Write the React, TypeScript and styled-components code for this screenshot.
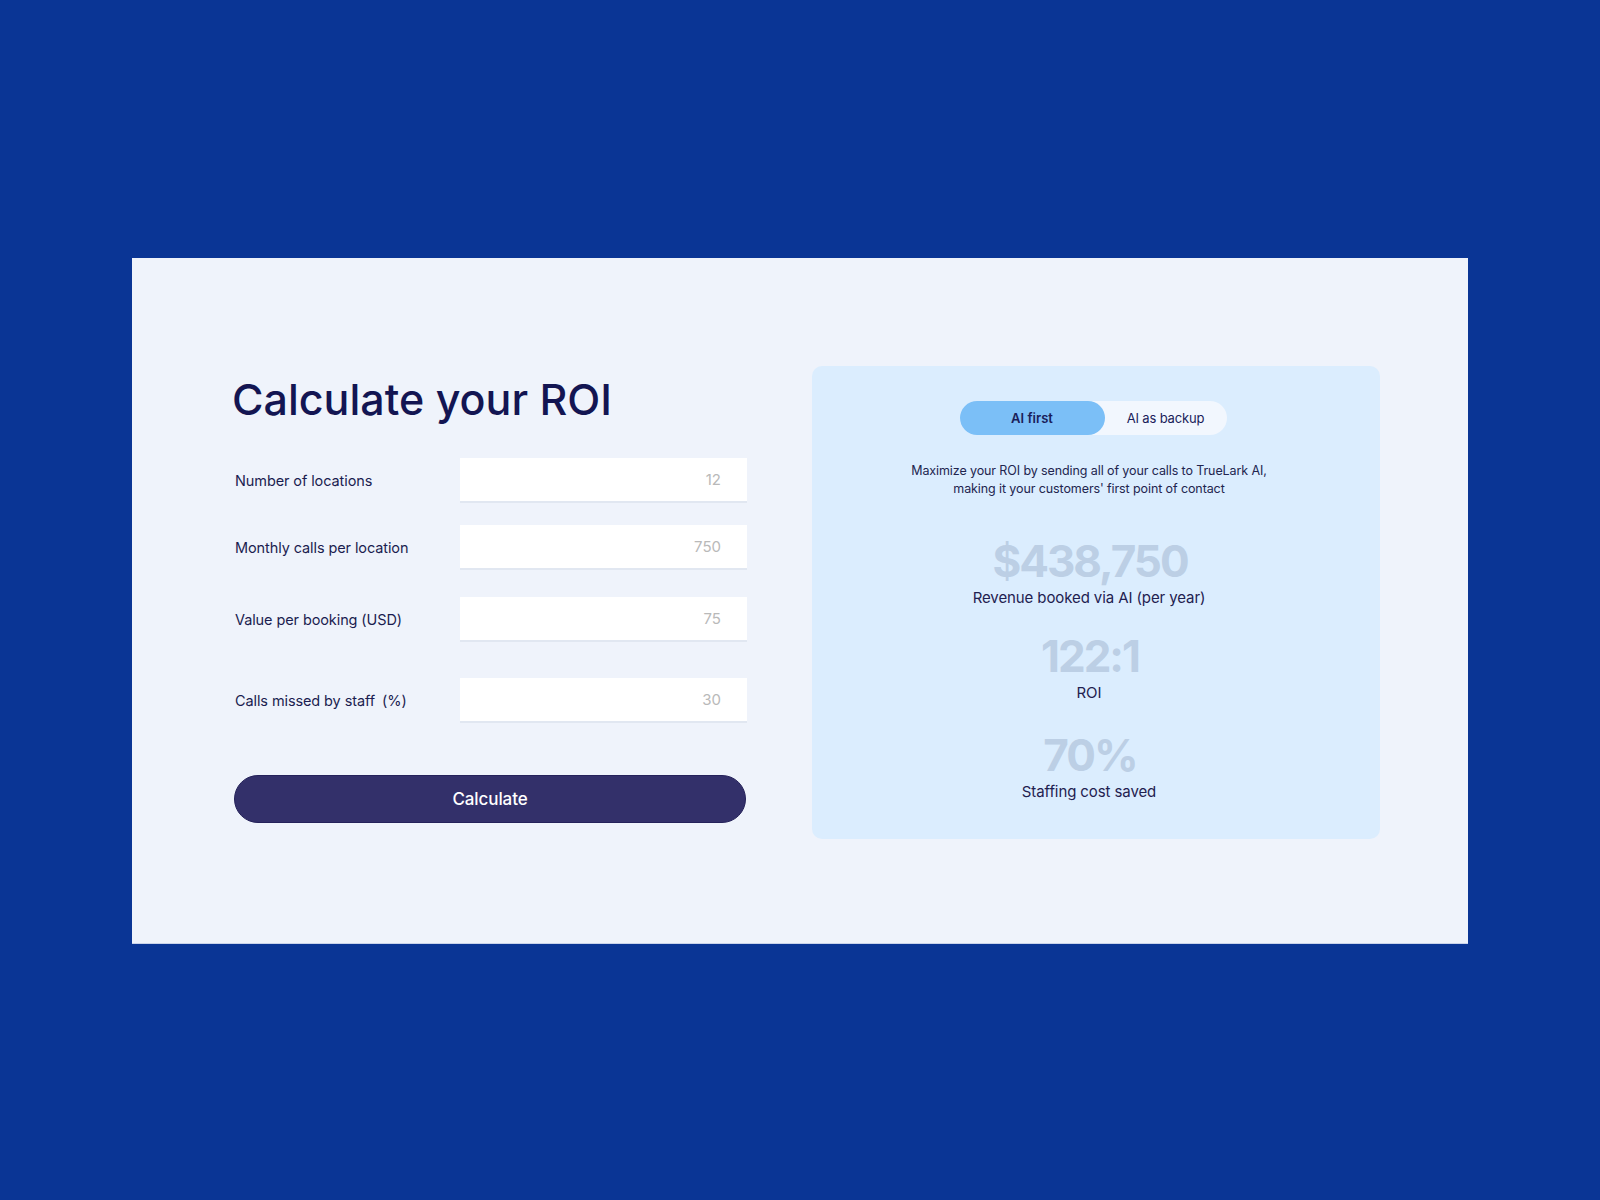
import React from "react";
import styled, { createGlobalStyle } from "styled-components";

const GlobalStyle = createGlobalStyle`
  * { box-sizing: border-box; }
  html, body { margin: 0; padding: 0; }
  body {
    background: #0a3595;
    font-family: Inter, "Noto Sans", "Liberation Sans", sans-serif;
    -webkit-font-smoothing: antialiased;
  }
`;

const Page = styled.div`
  width: 100%;
  height: 1200px;
  display: flex;
  align-items: center;
  justify-content: center;
`;

const Panel = styled.section`
  width: 1336px;
  height: 685px;
  background: #eff3fb;
  box-shadow: 0 1px 0 #c9d3ea;
  display: flex;
  align-items: flex-start;
  padding: 108px 88px 0 100px;
  gap: 65px;
`;

const FormColumn = styled.div`
  width: 515px;
  padding-top: 8px;
  display: flex;
  flex-direction: column;
`;

const Title = styled.h1`
  margin: 0;
  font-size: 43px;
  line-height: 1.2;
  font-weight: 500;
  letter-spacing: 0;
  color: #131552;
`;

const Row = styled.div<{ $gap: number }>`
  display: flex;
  align-items: center;
  margin-top: ${(p) => p.$gap}px;
`;

const Label = styled.label`
  flex: 1;
  padding-left: 3px;
  font-size: 14.5px;
  letter-spacing: -0.1px;
  color: #1b1d50;
`;

const Field = styled.input`
  width: 287px;
  height: 45px;
  border: none;
  border-bottom: 2px solid #e1e7f1;
  background: #ffffff;
  text-align: right;
  padding: 0 26px 0 12px;
  font-family: inherit;
  font-size: 15px;
  color: #b9b9b9;
  outline: none;
  &::placeholder { color: #b9b9b9; }
`;

const CalcButton = styled.button`
  margin-top: 52px;
  margin-left: 2px;
  width: 512px;
  height: 48px;
  border-radius: 24px;
  border: 1px solid #25225a;
  background: #33306a;
  color: #ffffff;
  font-family: inherit;
  font-size: 17px;
  font-weight: 500;
  letter-spacing: -0.1px;
  cursor: pointer;
`;

const ResultCard = styled.div`
  width: 568px;
  height: 473px;
  background: #dbedfe;
  border-radius: 10px;
  padding: 35px 14px 0 0;
  display: flex;
  flex-direction: column;
  align-items: center;
`;

const Toggle = styled.div`
  width: 267px;
  height: 34px;
  margin-left: 8px;
  border-radius: 17px;
  background: #f2f7fe;
  display: flex;
`;

const ToggleOption = styled.button<{ $active?: boolean }>`
  border: none;
  height: 34px;
  border-radius: 17px;
  flex: ${(p) => (p.$active ? "0 0 145px" : "1")};
  background: ${(p) => (p.$active ? "#7bbff7" : "transparent")};
  color: #1a1d5a;
  font-family: inherit;
  font-size: 13px;
  font-weight: ${(p) => (p.$active ? 600 : 400)};
  letter-spacing: ${(p) => (p.$active ? "0" : "-0.15px")};
  padding: 0;
  cursor: pointer;
`;

const Description = styled.p`
  margin: 27px 0 0;
  text-align: center;
  font-size: 12.5px;
  line-height: 18px;
  letter-spacing: -0.1px;
  color: #22254f;
`;

const Stat = styled.div<{ $gap: number }>`
  margin-top: ${(p) => p.$gap}px;
  display: flex;
  flex-direction: column;
  align-items: center;
  gap: 4px;
`;

const StatValue = styled.div`
  font-size: 44px;
  line-height: 46px;
  font-weight: 700;
  letter-spacing: -2px;
  padding-left: 2px;
  color: #bccfe5;
`;

const StatLabel = styled.div`
  font-size: 15px;
  line-height: 20px;
  letter-spacing: -0.1px;
  color: #1f2150;
`;

const fields = [
  { label: "Number of locations", value: "12", gap: 33 },
  { label: "Monthly calls per location", value: "750", gap: 22 },
  { label: "Value per booking (USD)", value: "75", gap: 27 },
  { label: "Calls missed by staff\u2002(%)", value: "30", gap: 36 },
];

const stats = [
  { value: "$438,750", label: "Revenue booked via AI (per year)", gap: 40 },
  { value: "122:1", label: "ROI", gap: 25 },
  { value: "70%", label: "Staffing cost saved", gap: 29 },
];

export default function App() {
  return (
    <>
      <GlobalStyle />
      <Page>
        <Panel>
          <FormColumn>
            <Title>Calculate your ROI</Title>
            {fields.map((f) => (
              <Row key={f.label} $gap={f.gap}>
                <Label>{f.label}</Label>
                <Field placeholder={f.value} />
              </Row>
            ))}
            <CalcButton>Calculate</CalcButton>
          </FormColumn>
          <ResultCard>
            <Toggle>
              <ToggleOption $active>AI first</ToggleOption>
              <ToggleOption>AI as backup</ToggleOption>
            </Toggle>
            <Description>
              Maximize your ROI by sending all of your calls to TrueLark AI,
              <br />
              making it your customers' first point of contact
            </Description>
            {stats.map((s) => (
              <Stat key={s.label} $gap={s.gap}>
                <StatValue>{s.value}</StatValue>
                <StatLabel>{s.label}</StatLabel>
              </Stat>
            ))}
          </ResultCard>
        </Panel>
      </Page>
    </>
  );
}
